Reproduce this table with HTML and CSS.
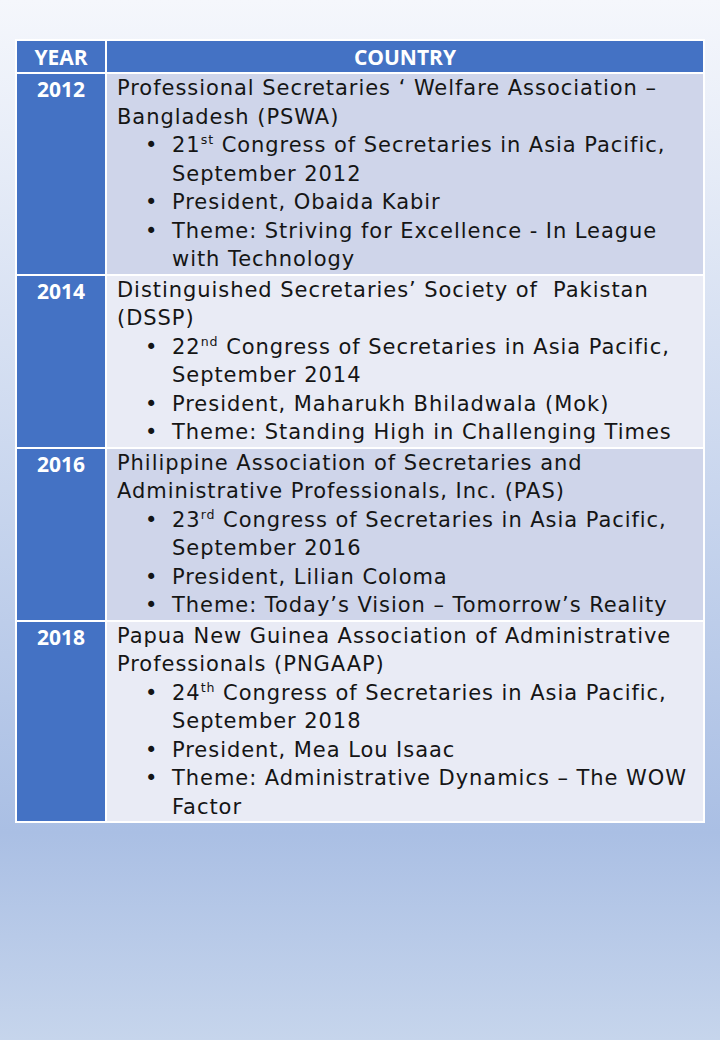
FILE: index.html
```html
<!DOCTYPE html>
<html>
<head>
<meta charset="utf-8">
<link rel="stylesheet" href="styles.css">
</head>
<body>
<div class="slide">
  <table class="grid">
    <thead>
      <tr><th class="year">YEAR</th><th class="country">COUNTRY</th></tr>
    </thead>
    <tbody>
      <tr class="odd">
        <td class="year">2012</td>
        <td class="country">
          <div class="ln">Professional Secretaries ‘ Welfare Association –</div>
          <div class="ln">Bangladesh (PSWA)</div>
          <div class="bl"><span class="dot">•</span><div><div class="ln">21<sup>st</sup> Congress of Secretaries in Asia Pacific,</div><div class="ln">September 2012</div></div></div>
          <div class="bl"><span class="dot">•</span><div><div class="ln">President, Obaida Kabir</div></div></div>
          <div class="bl"><span class="dot">•</span><div><div class="ln">Theme: Striving for Excellence - In League</div><div class="ln">with Technology</div></div></div>
        </td>
      </tr>
      <tr class="even">
        <td class="year">2014</td>
        <td class="country">
          <div class="ln">Distinguished Secretaries’ Society of&nbsp; Pakistan</div>
          <div class="ln">(DSSP)</div>
          <div class="bl"><span class="dot">•</span><div><div class="ln">22<sup>nd</sup> Congress of Secretaries in Asia Pacific,</div><div class="ln">September 2014</div></div></div>
          <div class="bl"><span class="dot">•</span><div><div class="ln">President, Maharukh Bhiladwala (Mok)</div></div></div>
          <div class="bl"><span class="dot">•</span><div><div class="ln">Theme: Standing High in Challenging Times</div></div></div>
        </td>
      </tr>
      <tr class="odd">
        <td class="year">2016</td>
        <td class="country">
          <div class="ln">Philippine Association of Secretaries and</div>
          <div class="ln">Administrative Professionals, Inc. (PAS)</div>
          <div class="bl"><span class="dot">•</span><div><div class="ln">23<sup>rd</sup> Congress of Secretaries in Asia Pacific,</div><div class="ln">September 2016</div></div></div>
          <div class="bl"><span class="dot">•</span><div><div class="ln">President, Lilian Coloma</div></div></div>
          <div class="bl"><span class="dot">•</span><div><div class="ln">Theme: Today’s Vision – Tomorrow’s Reality</div></div></div>
        </td>
      </tr>
      <tr class="even">
        <td class="year">2018</td>
        <td class="country">
          <div class="ln">Papua New Guinea Association of Administrative</div>
          <div class="ln">Professionals (PNGAAP)</div>
          <div class="bl"><span class="dot">•</span><div><div class="ln">24<sup>th</sup> Congress of Secretaries in Asia Pacific,</div><div class="ln">September 2018</div></div></div>
          <div class="bl"><span class="dot">•</span><div><div class="ln">President, Mea Lou Isaac</div></div></div>
          <div class="bl"><span class="dot">•</span><div><div class="ln">Theme: Administrative Dynamics – The WOW</div><div class="ln">Factor</div></div></div>
        </td>
      </tr>
    </tbody>
  </table>
</div>
</body>
</html>
```

FILE: styles.css
```css
html, body {
  margin: 0;
  padding: 0;
}
body {
  width: 720px;
  height: 1040px;
  background: linear-gradient(180deg, #f5f7fc 0%, #aabfe4 80%, #c6d5ec 100%);
  font-family: "Open Sans", "DejaVu Sans", sans-serif;
  color: #1a1a1a;
}
.slide {
  padding: 39px 0 0 15px;
}
.grid {
  border-collapse: collapse;
  width: 690px;
  table-layout: fixed;
}
.grid th, .grid td {
  border: 2px solid #ffffff;
  padding: 0;
  vertical-align: top;
}
.grid th {
  background: #4472c4;
  color: #ffffff;
  font-weight: 700;
  font-size: 21px;
  height: 31px;
  text-align: center;
  vertical-align: middle;
}
.grid th.year { width: 88px; }
td.year {
  background: #4472c4;
  color: #ffffff;
  font-weight: 700;
  font-size: 21px;
  text-align: center;
  line-height: 30px;
}
td.country {
  font-family: "DejaVu Sans", sans-serif;
  font-size: 21px;
  line-height: 28.5px;
  padding-left: 10px;
  letter-spacing: 0.95px;
  color: #151515;
}
tr.odd td.country { background: #cfd5ea; }
tr.even td.country { background: #e9ebf5; }
.ln { white-space: nowrap; }
.bl {
  display: flex;
  padding-left: 28px;
}
.dot {
  width: 27px;
  flex: none;
}
sup {
  font-size: 0.6em;
  line-height: 0;
  vertical-align: 0.6em;
}
```
